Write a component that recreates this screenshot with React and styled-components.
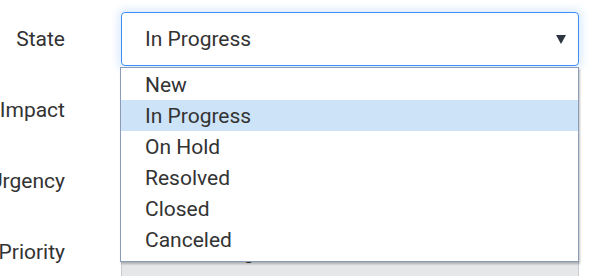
import styled, { createGlobalStyle } from "styled-components";

const GlobalStyle = createGlobalStyle`
  body {
    margin: 0;
    background: #ffffff;
    font-family: Roboto, "Noto Sans", sans-serif;
    color: #333333;
  }
`;

const stateOptions = ["New", "In Progress", "On Hold", "Resolved", "Closed", "Canceled"];

const fields = [
  { label: "State", value: "In Progress", open: true },
  { label: "Impact", value: "3 - Low" },
  { label: "Urgency", value: "3 - Low" },
  { label: "Priority", value: "5 - Planning", readOnly: true },
];

export default function App() {
  return (
    <>
      <GlobalStyle />
      <Form>
        {fields.map((f) => (
          <Row key={f.label}>
            <Label>
              <span>{f.label}</span>
            </Label>
            <FieldWrap>
              <Field $focused={f.open} $readOnly={f.readOnly}>
                {f.value}
                {!f.readOnly && (
                  <Caret viewBox="0 0 10 9">
                    <path d="M0 0 H10 L5 9 Z" fill="#2e3440" />
                  </Caret>
                )}
              </Field>
              {f.open && (
                <ListBox>
                  {stateOptions.map((o) => (
                    <Option key={o} $active={o === f.value}>
                      {o}
                    </Option>
                  ))}
                </ListBox>
              )}
            </FieldWrap>
          </Row>
        ))}
      </Form>
    </>
  );
}

const Form = styled.div`
  display: flex;
  flex-direction: column;
  gap: 17px;
  padding-top: 12px;
  width: 591px;
  height: 276px;
  overflow: hidden;
  box-sizing: border-box;
`;

const Row = styled.div`
  display: flex;
  align-items: center;
  gap: 56px;
`;

const Label = styled.div`
  width: 65px;
  flex: none;
  display: flex;
  justify-content: flex-end;
  overflow: hidden;
  white-space: nowrap;
  font-size: 21px;
  color: #333333;
`;

const FieldWrap = styled.div`
  position: relative;
  width: 458px;
`;

const Field = styled.div`
  height: 54px;
  box-sizing: border-box;
  display: flex;
  align-items: center;
  justify-content: space-between;
  padding: 0 12px 0 23px;
  font-size: 21px;
  color: #333333;
  border-radius: 4px;
  border: 1px solid ${({ $focused }) => ($focused ? "#3b8ef3" : "#c9cccf")};
  background: ${({ $readOnly }) => ($readOnly ? "#e6e7e9" : "#ffffff")};
  box-shadow: ${({ $focused }) =>
    $focused ? "0 0 8px 3px rgba(59, 142, 243, 0.18)" : "none"};
`;

const Caret = styled.svg`
  width: 10px;
  height: 9px;
`;

const ListBox = styled.div`
  position: absolute;
  top: 55px;
  left: -1px;
  width: 459px;
  box-sizing: border-box;
  background: #ffffff;
  border: 1px solid #8d9cb6;
  box-shadow: 1px 2px 2px rgba(0, 0, 0, 0.25);
  padding: 1px 0 6px;
  z-index: 10;
`;

const Option = styled.div`
  height: 31px;
  display: flex;
  align-items: center;
  padding-left: 24px;
  font-size: 21px;
  color: #333333;
  background: ${({ $active }) => ($active ? "#cde3f7" : "transparent")};
`;
